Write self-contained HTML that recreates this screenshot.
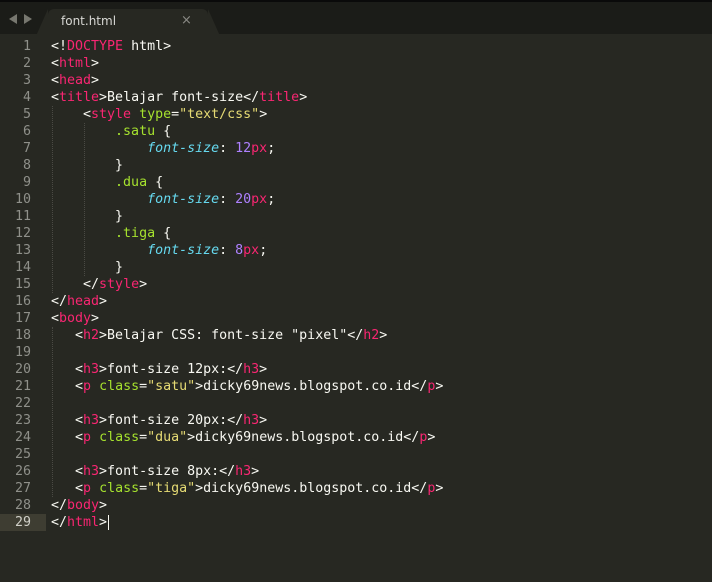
<!DOCTYPE html>
<html><head><style>
body{margin:0;width:712px;height:582px;background:#272822;overflow:hidden;position:relative;font-family:"DejaVu Sans Mono","Liberation Mono",monospace;}
#bar{position:absolute;left:0;top:0;width:712px;height:34px;background:#1b1c18;border-top:2px solid #0a0a0a;box-sizing:border-box;}
#tab{position:absolute;left:48px;top:7px;width:160px;height:27px;background:#272822;border-radius:6px 6px 0 0;}
#tab:before{content:"";position:absolute;left:-12px;bottom:0;border-bottom:27px solid #272822;border-left:12px solid transparent;}
#tab:after{content:"";position:absolute;right:-12px;bottom:0;border-bottom:27px solid #272822;border-right:12px solid transparent;}
#tab span{position:absolute;left:13px;top:5px;font:12px "DejaVu Sans",sans-serif;color:#d8d8d4;}
#tab i{position:absolute;left:133px;top:4px;font:normal 13px "DejaVu Sans",sans-serif;color:#8a8a85;}
.arr{position:absolute;top:12px;width:0;height:0;border-top:5px solid transparent;border-bottom:5px solid transparent;}
#gut{position:absolute;left:0;top:38px;width:31px;text-align:right;color:#8f908a;font-size:13.3px;line-height:17px;}
#code{position:absolute;left:51px;top:38px;color:#f8f8f2;font-size:13.3px;line-height:17px;white-space:pre;}
.t{color:#f92672}.a{color:#a6e22e}.s{color:#e6db74}.n{color:#ae81ff}.p{color:#66d9ef;font-style:italic}
#cur{position:absolute;left:0;top:514px;width:46px;height:17px;background:#3e3d32;}
.g{position:absolute;border-left:1px dotted #4a4a44;}
</style></head><body>
<div id="bar"><div class="arr" style="left:9px;border-right:8px solid #77776f"></div><div class="arr" style="left:24px;border-left:8px solid #77776f"></div>
<div id="tab"><span>font.html</span><i>×</i></div></div>
<div id="cur"></div>
<div class="g" style="left:52px;top:106px;height:187px"></div>
<div class="g" style="left:84px;top:123px;height:153px"></div>
<div class="g" style="left:52px;top:327px;height:170px"></div>
<div id="gut">1<br>2<br>3<br>4<br>5<br>6<br>7<br>8<br>9<br>10<br>11<br>12<br>13<br>14<br>15<br>16<br>17<br>18<br>19<br>20<br>21<br>22<br>23<br>24<br>25<br>26<br>27<br>28<br><span style="color:#d0d0c8">29</span></div>
<div id="code">&lt;!<span class="t">DOCTYPE</span> html&gt;
&lt;<span class="t">html</span>&gt;
&lt;<span class="t">head</span>&gt;
&lt;<span class="t">title</span>&gt;Belajar font-size&lt;/<span class="t">title</span>&gt;
    &lt;<span class="t">style</span> <span class="a">type</span>=<span class="s">"text/css"</span>&gt;
        <span class="a">.satu</span> {
            <span class="p">font-size</span>: <span class="n">12</span><span class="t">px</span>;
        }
        <span class="a">.dua</span> {
            <span class="p">font-size</span>: <span class="n">20</span><span class="t">px</span>;
        }
        <span class="a">.tiga</span> {
            <span class="p">font-size</span>: <span class="n">8</span><span class="t">px</span>;
        }
    &lt;/<span class="t">style</span>&gt;
&lt;/<span class="t">head</span>&gt;
&lt;<span class="t">body</span>&gt;
   &lt;<span class="t">h2</span>&gt;Belajar CSS: font-size "pixel"&lt;/<span class="t">h2</span>&gt;

   &lt;<span class="t">h3</span>&gt;font-size 12px:&lt;/<span class="t">h3</span>&gt;
   &lt;<span class="t">p</span> <span class="a">class</span>=<span class="s">"satu"</span>&gt;dicky69news.blogspot.co.id&lt;/<span class="t">p</span>&gt;

   &lt;<span class="t">h3</span>&gt;font-size 20px:&lt;/<span class="t">h3</span>&gt;
   &lt;<span class="t">p</span> <span class="a">class</span>=<span class="s">"dua"</span>&gt;dicky69news.blogspot.co.id&lt;/<span class="t">p</span>&gt;

   &lt;<span class="t">h3</span>&gt;font-size 8px:&lt;/<span class="t">h3</span>&gt;
   &lt;<span class="t">p</span> <span class="a">class</span>=<span class="s">"tiga"</span>&gt;dicky69news.blogspot.co.id&lt;/<span class="t">p</span>&gt;
&lt;/<span class="t">body</span>&gt;
&lt;/<span class="t">html</span>&gt;<span style="border-left:1px solid #f8f8f0;margin-left:1px"></span></div>
</body></html>
